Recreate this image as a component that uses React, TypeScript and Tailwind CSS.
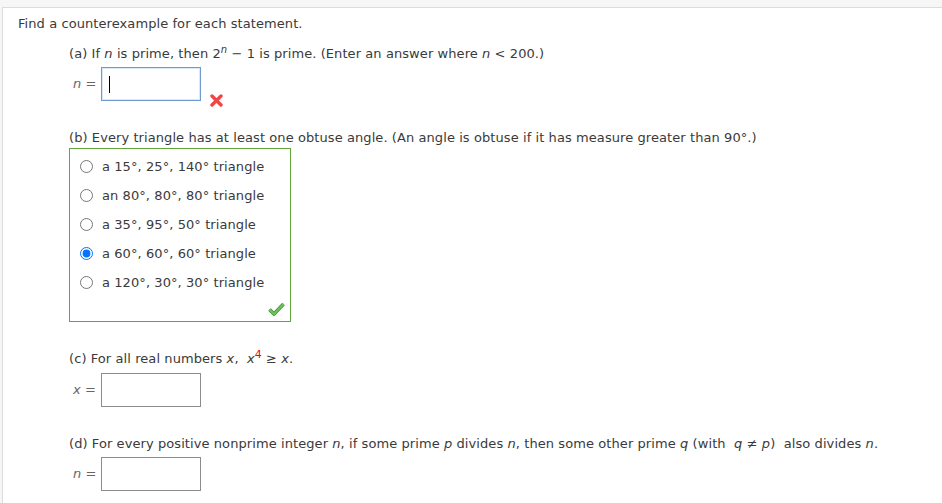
const options = [
  { label: 'a 15°, 25°, 140° triangle', checked: false },
  { label: 'an 80°, 80°, 80° triangle', checked: false },
  { label: 'a 35°, 95°, 50° triangle', checked: false },
  { label: 'a 60°, 60°, 60° triangle', checked: true },
  { label: 'a 120°, 30°, 30° triangle', checked: false },
];

const Label = ({ v }: { v: string }) => (
  <span className="w-[32px] shrink-0 pl-[4px] text-[#666] text-[13px]">
    <i>{v}</i> =
  </span>
);

const Box = ({ focus }: { focus?: boolean }) =>
  focus ? (
    <div className="w-[100px] h-[34px] border border-[#6f9bd1] shadow-[inset_0_0_0_1px_#d9e7f7] bg-white flex items-center pl-[7px]">
      <span className="w-[1px] h-[17px] bg-black" />
    </div>
  ) : (
    <div className="w-[100px] h-[34px] border border-[#8c8c8c] bg-white" />
  );

export default function App() {
  return (
    <div
      className="w-[942px] h-[503px] bg-[#f6f6f6] pt-[7px] pl-[2px] overflow-hidden text-[#3a3a3a] text-[13px] tracking-[0.08px]"
      style={{ fontFamily: '"DejaVu Sans", Verdana, sans-serif' }}
    >
      <div className="h-full bg-white border-l border-t border-[#dcdcdc] pl-[15px] pt-[8px]">
        <p className="leading-[16px]">Find a counterexample for each statement.</p>

        <div className="pl-[51px]">
          {/* (a) */}
          <p className="leading-[16px] mt-[14px]">
            (a) If <i>n</i> is prime, then 2<sup className="text-[10px] italic">n</sup> − 1 is prime. (Enter an answer where <i>n</i> &lt; 200.)
          </p>
          <div className="flex items-center mt-[5px]">
            <Label v="n" />
            <Box focus />
            <svg width="13" height="13" viewBox="0 0 13 13" className="ml-[9px] self-end mb-[-6px]">
              <path d="M2 2 L11 11 M11 2 L2 11" stroke="#f04646" strokeWidth="3.4" strokeLinecap="round" />
            </svg>
          </div>

          {/* (b) */}
          <p className="leading-[16px] mt-[29px]">
            (b) Every triangle has at least one obtuse angle. (An angle is obtuse if it has measure greater than 90°.)
          </p>
          <div className="w-[222px] h-[174px] mt-[2px] border border-[#62a43c] flex flex-col pt-[3px]">
            {options.map((o) => (
              <label key={o.label} className="h-[29px] flex items-center pl-[10px] gap-[9px]">
                <input type="radio" name="b" checked={o.checked} readOnly className="m-0 w-[13px] h-[13px]" />
                <span>{o.label}</span>
              </label>
            ))}
            <div className="flex justify-end pr-[5px] mt-[5px]">
              <svg width="17" height="14" viewBox="0 0 17 14">
                <path d="M1.5 7.5 L6 12 L15.5 2" fill="none" stroke="#3f8f2e" strokeWidth="3.6" strokeLinejoin="round" />
                <path d="M1.5 7.5 L6 12 L15.5 2" fill="none" stroke="#6cc35a" strokeWidth="2.2" strokeLinejoin="round" />
              </svg>
            </div>
          </div>

          {/* (c) */}
          <p className="leading-[16px] mt-[29px]">
            (c) For all real numbers <i>x</i>,&nbsp; <i>x</i>
            <sup className="text-[11px] text-[#ff0000]">4</sup> ≥ <i>x</i>.
          </p>
          <div className="flex items-center mt-[6px]">
            <Label v="x" />
            <Box />
          </div>

          {/* (d) */}
          <p className="leading-[16px] mt-[29px]">
            (d) For every positive nonprime integer <i>n</i>, if some prime <i>p</i> divides <i>n</i>, then some other prime <i>q</i> (with&nbsp; <i>q</i> ≠ <i>p</i>)&nbsp; also divides <i>n</i>.
          </p>
          <div className="flex items-center mt-[5px]">
            <Label v="n" />
            <Box />
          </div>
        </div>
      </div>
    </div>
  );
}
